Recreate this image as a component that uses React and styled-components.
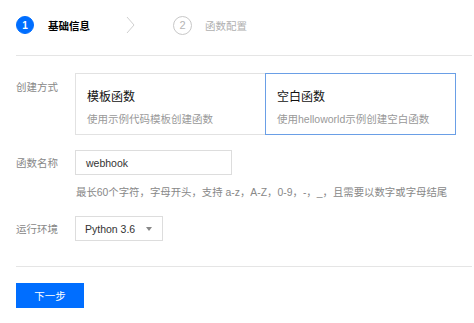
import React from 'react';
import styled, { createGlobalStyle } from 'styled-components';

const GlobalStyle = createGlobalStyle`
  html, body {
    margin: 0;
    padding: 0;
    background: #fff;
  }
  body {
    font-family: "Liberation Sans", "Noto Sans CJK SC", sans-serif;
    font-size: 10.5px;
    color: #333;
  }
`;

const Page = styled.div`
  padding: 0 2px 0 16px;
`;

const Steps = styled.div`
  display: flex;
  align-items: center;
  height: 50px;
  padding-bottom: 5px;
  border-bottom: 1px solid #e5e5e5;
`;

const StepCircle = styled.span`
  box-sizing: border-box;
  width: ${p => (p.$active ? 18 : 19)}px;
  height: ${p => (p.$active ? 18 : 19)}px;
  border-radius: 50%;
  display: flex;
  align-items: center;
  justify-content: center;
  font-size: ${p => (p.$active ? 10 : 11)}px;
  font-weight: ${p => (p.$active ? 700 : 400)};
  color: ${p => (p.$active ? '#fff' : '#b5b5b5')};
  background: ${p => (p.$active ? '#006eff' : '#fff')};
  border: 1px solid ${p => (p.$active ? '#006eff' : '#c8c8c8')};
  margin-right: ${p => (p.$active ? 14 : 13)}px;
`;

const StepLabel = styled.span`
  font-size: 10.5px;
  font-weight: ${p => (p.$active ? 700 : 400)};
  color: ${p => (p.$active ? '#000' : '#b0b0b0')};
`;

const Chevron = styled.svg`
  margin: 0 38px 0 36px;
  display: block;
`;

const Form = styled.div`
  padding-top: 17px;
`;

const Row = styled.div`
  display: flex;
  align-items: flex-start;
  margin-top: ${p => p.$gap || 0}px;
`;

const Label = styled.div`
  width: 59px;
  flex-shrink: 0;
  color: #888;
  font-size: 10.5px;
  line-height: ${p => p.$lh || 25}px;
  padding-top: ${p => p.$pt || 0}px;
`;

const Cards = styled.div`
  display: flex;
`;

const Card = styled.div`
  box-sizing: border-box;
  width: 191px;
  height: 62px;
  padding: 14px 0 0 11px;
  border: 1px solid ${p => (p.$selected ? '#6a9fe6' : '#e2e2e2')};
  margin-left: ${p => (p.$selected ? '-1px' : '0')};
  position: relative;
  z-index: ${p => (p.$selected ? 1 : 0)};
  background: #fff;
`;

const CardTitle = styled.div`
  font-size: 12px;
  line-height: 18px;
  color: #111;
`;

const CardDesc = styled.div`
  margin-top: 5px;
  font-size: 10.5px;
  line-height: 16px;
  color: #999;
`;

const Input = styled.div`
  box-sizing: border-box;
  width: 157px;
  height: 25px;
  border: 1px solid #ddd;
  padding-left: 10px;
  display: flex;
  align-items: center;
  color: #333;
  font-size: 10.5px;
`;

const Hint = styled.div`
  margin: 9px 0 0 60px;
  font-size: 10.4px;
  line-height: 16px;
  color: #888;
  white-space: nowrap;
`;

const Select = styled.div`
  box-sizing: border-box;
  width: 88px;
  height: 25px;
  border: 1px solid #ddd;
  padding: 0 9px 0 9px;
  display: flex;
  align-items: center;
  justify-content: space-between;
  color: #333;
  font-size: 10.5px;
`;

const Caret = styled.span`
  width: 0;
  height: 0;
  border-left: 3px solid transparent;
  border-right: 3px solid transparent;
  border-top: 4px solid #888;
  margin-right: 1px;
`;

const Divider = styled.div`
  margin-top: 24px;
  border-top: 1px solid #e5e5e5;
`;

const Footer = styled.div`
  display: flex;
  padding-top: 16px;
`;

const PrimaryButton = styled.button`
  width: 68px;
  height: 25px;
  border: none;
  background: #006eff;
  color: #fff;
  font-family: inherit;
  font-size: 10.5px;
  padding: 0;
  margin: 0;
  cursor: pointer;
`;

export default function App() {
  return (
    <Page>
      <GlobalStyle />
      <Steps>
        <StepCircle $active>1</StepCircle>
        <StepLabel $active>基础信息</StepLabel>
        <Chevron width="9" height="18" viewBox="0 0 9 18">
          <path d="M1 1 L8 9 L1 17" fill="none" stroke="#d0d0d0" strokeWidth="1" />
        </Chevron>
        <StepCircle>2</StepCircle>
        <StepLabel>函数配置</StepLabel>
      </Steps>
      <Form>
        <Row>
          <Label $lh={16} $pt={6}>创建方式</Label>
          <Cards>
            <Card>
              <CardTitle>模板函数</CardTitle>
              <CardDesc>使用示例代码模板创建函数</CardDesc>
            </Card>
            <Card $selected>
              <CardTitle>空白函数</CardTitle>
              <CardDesc>使用helloworld示例创建空白函数</CardDesc>
            </Card>
          </Cards>
        </Row>
        <Row $gap={15}>
          <Label $pt={1}>函数名称</Label>
          <Input>webhook</Input>
        </Row>
        <Hint>最长60个字符，字母开头，支持 a-z，A-Z，0-9，-，_，且需要以数字或字母结尾</Hint>
        <Row $gap={15}>
          <Label $pt={1}>运行环境</Label>
          <Select>
            <span>Python 3.6</span>
            <Caret />
          </Select>
        </Row>
      </Form>
      <Divider />
      <Footer>
        <PrimaryButton>下一步</PrimaryButton>
      </Footer>
    </Page>
  );
}
